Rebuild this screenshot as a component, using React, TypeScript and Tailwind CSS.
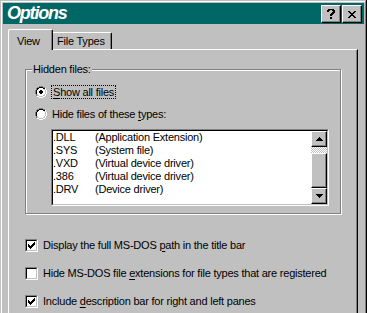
import React from 'react';

// tiny pixel-art helper for the Win95 glyphs
function Pixels({ rows, colors, className }: { rows: string[]; colors: Record<string, string>; className?: string }) {
  const w = rows[0].length;
  const h = rows.length;
  const rects: React.ReactNode[] = [];
  rows.forEach((row, y) => {
    row.split('').forEach((c, x) => {
      if (colors[c]) rects.push(<rect key={`${x}-${y}`} x={x} y={y} width={1} height={1} fill={colors[c]} />);
    });
  });
  return (
    <svg width={w} height={h} viewBox={`0 0 ${w} ${h}`} shapeRendering="crispEdges" className={className}>
      {rects}
    </svg>
  );
}

const K = { x: '#000' };

const closeGlyph = ['xx....xx', '.xx..xx.', '..xxxx..', '...xx...', '..xxxx..', '.xx..xx.', 'xx....xx'];
const helpGlyph = [
  '.xxxxxx.',
  'xxx..xxx',
  'xx....xx',
  '.....xxx',
  '....xxx.',
  '...xxx..',
  '...xx...',
  '........',
  '...xx...',
  '...xx...',
];
const upArrow = ['...x...', '..xxx..', '.xxxxx.', 'xxxxxxx'];
const downArrow = ['xxxxxxx', '.xxxxx.', '..xxx..', '...x...'];

const radioRows = [
  '....GGGG....',
  '..GGKKKKGG..',
  '.GKKwwwwKKW.',
  '.GKwwwwwwLW.',
  'GKwwwwwwwwLW',
  'GKwwwwwwwwLW',
  'GKwwwwwwwwLW',
  'GKwwwwwwwwLW',
  '.GLwwwwwwLW.',
  '.GLLwwwwLLW.',
  '..WWLLLLWW..',
  '....WWWW....',
];
const radioColors = { G: '#808080', K: '#000', w: '#fff', L: '#c0c0c0', W: '#fff' };

function Radio({ checked }: { checked?: boolean }) {
  return (
    <div className="relative w-[12px] h-[12px] shrink-0">
      <Pixels rows={radioRows} colors={radioColors} />
      {checked && (
        <Pixels
          rows={['.xx.', 'xxxx', 'xxxx', '.xx.']}
          colors={K}
          className="absolute left-[4px] top-[4px]"
        />
      )}
    </div>
  );
}

function Checkbox({ checked }: { checked?: boolean }) {
  return (
    <div className="relative w-[13px] h-[13px] shrink-0 bg-white border border-t-[#808080] border-l-[#808080] border-r-white border-b-white">
      <div className="w-full h-full border border-t-black border-l-black border-r-[#c0c0c0] border-b-[#c0c0c0]">
        {checked && (
          <Pixels
            rows={['......x', '.....xx', 'x...xxx', 'xx.xxx.', 'xxxxx..', '.xxx...', '..x....']}
            colors={K}
            className="ml-[1px] mt-[1px]"
          />
        )}
      </div>
    </div>
  );
}

const raised =
  'bg-[#c0c0c0] border border-t-white border-l-white border-r-black border-b-black shadow-[inset_-1px_-1px_#808080]';

function TitleButton({ children }: { children: React.ReactNode }) {
  return <div className={`w-[20px] h-[18px] flex items-center justify-center ${raised}`}>{children}</div>;
}

const fileTypes = [
  ['.DLL', '(Application Extension)'],
  ['.SYS', '(System file)'],
  ['.VXD', '(Virtual device driver)'],
  ['.386', '(Virtual device driver)'],
  ['.DRV', '(Device driver)'],
];

const options = [
  { checked: true, pre: 'Display the full MS-DOS ', key: 'p', post: 'ath in the title bar' },
  { checked: false, pre: 'Hide MS-DOS file ', key: 'e', post: 'xtensions for file types that are registered' },
  { checked: true, pre: 'Include ', key: 'd', post: 'escription bar for right and left panes' },
];

export default function App() {
  return (
    <div className="w-[367px] h-[313px] overflow-hidden bg-[#c0c0c0] font-['Liberation_Sans',Arial,sans-serif] text-[11px] leading-[13px] tracking-[-0.22px] text-black">
      <div className="w-[367px] h-[340px] p-[3px] bg-[#c0c0c0] shadow-[inset_-1px_-1px_#000,inset_1px_1px_#c0c0c0,inset_-2px_-2px_#808080,inset_2px_2px_#fff]">
        {/* title bar */}
        <div className="h-[21px] bg-[#006666] flex items-center justify-between pl-[4px] pr-[2px]">
          <span className="text-white font-bold italic text-[18px] leading-[21px] tracking-[-1.2px]">Options</span>
          <div className="flex gap-[1px] mt-[1px]">
            <TitleButton>
              <Pixels rows={helpGlyph} colors={K} />
            </TitleButton>
            <TitleButton>
              <Pixels rows={closeGlyph} colors={K} />
            </TitleButton>
          </div>
        </div>

        {/* tabs */}
        <div className="pl-[5px] pr-[6px] pt-[4px]">
          <div className="flex items-end h-[21px]">
            <div className="relative z-10 -mb-[1px] h-[21px] w-[45px] bg-[#c0c0c0] border-t border-l border-white border-r border-r-black rounded-t-[2px] shadow-[inset_-1px_0_#808080] pl-[8px] pt-[5px]">
              View
            </div>
            <div className="h-[17px] w-[59px] bg-[#c0c0c0] border-t border-white border-r border-r-black rounded-tr-[2px] shadow-[inset_-1px_0_#808080] pl-[4px] pt-[2px]">
              File Types
            </div>
          </div>

          {/* page */}
          <div className="h-[300px] border-t border-l border-white border-r border-r-black shadow-[inset_-1px_0_#808080] pl-[16px] pr-[16px] pt-[19px]">
            <div className="relative border border-[#808080] shadow-[1px_1px_0_#fff,inset_1px_1px_0_#fff] pt-[14px] pl-[9px] pb-[7px]">
              <span className="absolute left-[6px] -top-[7px] px-[1px] bg-[#c0c0c0]">Hidden files:</span>

              <div className="flex items-center h-[16px] gap-[4px]">
                <Radio checked />
                <span className="border border-dotted border-black px-[1px] leading-[12px]">
                  <span className="underline underline-offset-2">S</span>how all files
                </span>
              </div>
              <div className="flex items-center h-[16px] gap-[5px] mt-[6px]">
                <Radio />
                <span>
                  Hide files of these <span className="underline underline-offset-2">t</span>ypes:
                </span>
              </div>

              <div className="mt-[7px] ml-[16px] w-[278px] h-[77px] bg-white border border-t-[#808080] border-l-[#808080] border-r-white border-b-white">
                <div className="h-full flex border border-t-black border-l-black border-r-[#c0c0c0] border-b-[#c0c0c0]">
                  <div className="flex-1">
                    {fileTypes.map(([ext, desc]) => (
                      <div key={ext} className="flex h-[13px]">
                        <span className="w-[42px]">{ext}</span>
                        <span>{desc}</span>
                      </div>
                    ))}
                  </div>
                  <div className="w-[16px] flex flex-col">
                    <div className={`h-[16px] flex items-center justify-center ${raised}`}>
                      <Pixels rows={upArrow} colors={K} />
                    </div>
                    <div className="h-[6px] bg-[repeating-conic-gradient(#c0c0c0_0_25%,#fff_0_50%)] bg-[length:2px_2px]" />
                    <div className={`h-[35px] ${raised}`} />
                    <div className={`h-[16px] flex items-center justify-center ${raised}`}>
                      <Pixels rows={downArrow} colors={K} />
                    </div>
                  </div>
                </div>
              </div>
            </div>

            <div className="flex flex-col gap-[12px] mt-[23px]">
              {options.map((o) => (
                <div key={o.pre} className="flex items-center h-[16px] gap-[5px]">
                  <Checkbox checked={o.checked} />
                  <span>
                    {o.pre}
                    <span className="underline underline-offset-2">{o.key}</span>
                    {o.post}
                  </span>
                </div>
              ))}
            </div>
          </div>
        </div>
      </div>
    </div>
  );
}
